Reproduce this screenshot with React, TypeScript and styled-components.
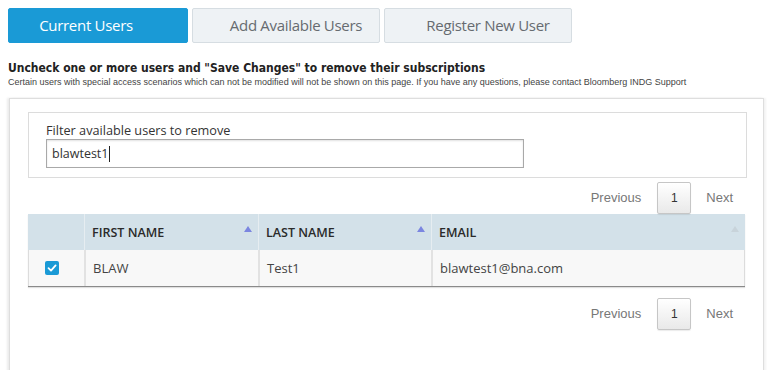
import React from "react";
import styled, { createGlobalStyle } from "styled-components";

const Global = createGlobalStyle`
  html, body { margin: 0; padding: 0; background: #fff; }
  body { font-family: "Open Sans", "Liberation Sans", sans-serif; color: #333; overflow: hidden; }
  * { box-sizing: border-box; }
`;

const Page = styled.div`
  padding: 8px 4px 0 8px;
  width: 768px;
  height: 370px;
  overflow: hidden;
`;

const Tabs = styled.div`
  display: flex;
  gap: 4px;
`;

const Tab = styled.button<{ $active?: boolean; $w: number; $shift: number }>`
  width: ${(p) => p.$w}px;
  height: 35px;
  border-radius: 2px;
  font-family: "Open Sans", sans-serif;
  font-size: 15px;
  letter-spacing: -0.3px;
  display: flex;
  align-items: center;
  justify-content: center;
  padding: 0 ${(p) => (p.$shift < 0 ? -p.$shift * 2 : 0)}px 1px ${(p) => (p.$shift > 0 ? p.$shift * 2 : 0)}px;
  cursor: pointer;
  border: 1px solid ${(p) => (p.$active ? "#1a9ad6" : "#d6dde2")};
  background: ${(p) => (p.$active ? "#1a9ad6" : "#eef2f5")};
  color: ${(p) => (p.$active ? "#ffffff" : "#666b70")};
`;

const Heading = styled.h2`
  margin: 18px 0 0;
  font-family: "DejaVu Sans Condensed", "DejaVu Sans", Verdana, sans-serif;
  font-weight: bold;
  font-size: 12px;
  line-height: 15px;
  color: #222;
`;

const Note = styled.p`
  margin: 1px 0 0;
  font-family: "Liberation Sans", Arial, sans-serif;
  font-size: 9px;
  line-height: 11px;
  color: #444;
`;

const Panel = styled.div`
  margin-top: 10px;
  margin-left: 1px;
  width: 755px;
  height: 300px;
  border: 1px solid #dedede;
  border-bottom: none;
  box-shadow: -2px 0 2px rgba(0, 0, 0, 0.08), 2px 0 2px rgba(0, 0, 0, 0.05);
  padding: 13px 16px 0 18px;
`;

const FilterBox = styled.div`
  height: 66px;
  border: 1px solid #dcdcdc;
  padding: 9px 18px 0 17px;
`;

const FilterLabel = styled.label`
  display: block;
  font-size: 12.7px;
  line-height: 16px;
  color: #333;
  margin-bottom: 1px;
`;

const FilterInput = styled.div`
  width: 478px;
  height: 29px;
  border: 1px solid #a9a9a9;
  box-shadow: inset 0 1px 2px rgba(0, 0, 0, 0.12);
  padding: 0 5px;
  display: flex;
  align-items: center;
  font-size: 12.5px;
  color: #333;
`;

const Caret = styled.span`
  display: inline-block;
  width: 1px;
  height: 16px;
  background: #222;
  margin-left: 1px;
`;

const Pager = styled.div<{ $top: number }>`
  display: flex;
  justify-content: flex-end;
  align-items: center;
  margin-top: ${(p) => p.$top}px;
  padding-right: 14px;
  height: 32px;
  font-family: "Liberation Sans", Arial, sans-serif;
  font-size: 13px;
  color: #777;
`;

const PageLink = styled.span`
  padding: 0 0 1px;
`;

const PageBtn = styled.span`
  width: 34px;
  height: 32px;
  margin: 0 15px 0 16px;
  border: 1px solid #c6c6c6;
  border-radius: 2px;
  background: linear-gradient(#ffffff, #e9e9e9);
  box-shadow: 0 1px 1px rgba(0, 0, 0, 0.08);
  display: flex;
  align-items: center;
  justify-content: center;
  color: #333;
  font-size: 12px;
`;

const Table = styled.div`
  width: 717px;
  border-bottom: 1px solid #8a8a8a;
  box-shadow: 0 1px 1px rgba(0, 0, 0, 0.12);
`;

const Row = styled.div<{ $head?: boolean }>`
  display: grid;
  grid-template-columns: 56px 174px 173px 314px;
  height: 36px;
  background: ${(p) => (p.$head ? "#d3e1e9" : "#f8f8f8")};
  box-shadow: ${(p) => (p.$head ? "none" : "inset 1px 0 0 #dcdcdc, inset -1px 0 0 #dcdcdc")};
`;

const Cell = styled.div<{ $head?: boolean; $box?: boolean }>`
  position: relative;
  display: flex;
  align-items: center;
  padding-left: ${(p) => (p.$box ? 17 : 7)}px;
  border-left: ${(p) => (p.$head ? "1px solid #e6edf1" : "2px solid #e2e2e2")};
  &:first-child { border-left: none; }
  font-size: ${(p) => (p.$head ? 12.5 : 13)}px;
  font-weight: ${(p) => (p.$head ? 600 : 400)};
  color: ${(p) => (p.$head ? "#2a2a2a" : "#444")};
`;

const SortUp = styled.span<{ $faint?: boolean }>`
  position: absolute;
  right: 6px;
  top: 12px;
  width: 0;
  height: 0;
  border-left: 4px solid transparent;
  border-right: 4px solid transparent;
  border-bottom: 6px solid ${(p) => (p.$faint ? "#c8d3da" : "#7b86e0")};
`;

const Check = styled.span`
  width: 14px;
  height: 14px;
  border-radius: 2px;
  background: #1a9ad6;
  display: flex;
  align-items: center;
  justify-content: center;
`;

export default function App() {
  return (
    <>
      <Global />
      <Page>
        <Tabs>
          <Tab $active $w={180} $shift={-12}>Current Users</Tab>
          <Tab $w={188} $shift={10}>Add Available Users</Tab>
          <Tab $w={188} $shift={10}>Register New User</Tab>
        </Tabs>
        <Heading>Uncheck one or more users and "Save Changes" to remove their subscriptions</Heading>
        <Note>
          Certain users with special access scenarios which can not be modified will not be shown on this page. If you have any questions, please contact Bloomberg INDG Support
        </Note>
        <Panel>
          <FilterBox>
            <FilterLabel>Filter available users to remove</FilterLabel>
            <FilterInput>
              blawtest1<Caret />
            </FilterInput>
          </FilterBox>
          <Pager $top={4}>
            <PageLink>Previous</PageLink>
            <PageBtn>1</PageBtn>
            <PageLink>Next</PageLink>
          </Pager>
          <Table>
            <Row $head>
              <Cell $head $box />
              <Cell $head>
                FIRST NAME
                <SortUp />
              </Cell>
              <Cell $head>
                LAST NAME
                <SortUp />
              </Cell>
              <Cell $head>
                EMAIL
                <SortUp $faint />
              </Cell>
            </Row>
            <Row>
              <Cell $box>
                <Check>
                  <svg width="10" height="10" viewBox="0 0 10 10">
                    <path d="M1.5 5.2 L4 7.6 L8.6 2.4" fill="none" stroke="#fff" strokeWidth="1.8" strokeLinecap="round" strokeLinejoin="round" />
                  </svg>
                </Check>
              </Cell>
              <Cell>BLAW</Cell>
              <Cell>Test1</Cell>
              <Cell>blawtest1@bna.com</Cell>
            </Row>
          </Table>
          <Pager $top={11}>
            <PageLink>Previous</PageLink>
            <PageBtn>1</PageBtn>
            <PageLink>Next</PageLink>
          </Pager>
        </Panel>
      </Page>
    </>
  );
}
